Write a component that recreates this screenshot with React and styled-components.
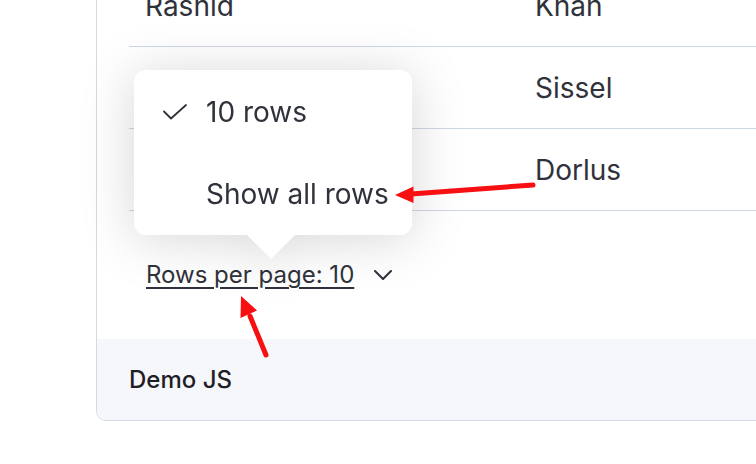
import React from 'react';
import styled, { createGlobalStyle } from 'styled-components';

const GlobalStyle = createGlobalStyle`
  html, body {
    margin: 0;
    padding: 0;
    background: #ffffff;
  }
  body {
    font-family: Inter, "Noto Sans", "Liberation Sans", sans-serif;
    color: #2f313a;
  }
`;

const rows = [
  { first: 'Rashid', last: 'Khan' },
  { first: '', last: 'Sissel' },
  { first: '', last: 'Dorlus' },
];

const options = [
  { label: '10 rows', checked: true },
  { label: 'Show all rows', checked: false },
];

const Page = styled.div`
  position: relative;
  width: 756px;
  height: 464px;
  overflow: hidden;
  padding-left: 96px;
  box-sizing: border-box;
`;

const Card = styled.div`
  width: 760px;
  margin-top: -36px;
  border: 1px solid #d3dae5;
  border-radius: 10px;
  background: #ffffff;
`;

const Table = styled.div`
  padding: 0 32px;
`;

const Row = styled.div`
  display: grid;
  grid-template-columns: 390px 1fr;
  height: 81px;
  align-items: center;
  border-bottom: 1px solid #cfd7e3;
`;

const Cell = styled.div`
  padding: 0 16px;
  font-size: 28px;
  line-height: 34px;
  color: #30323b;
`;

const Pagination = styled.div`
  height: 128px;
  display: flex;
  align-items: center;
  padding-left: 49px;
`;

const Trigger = styled.div`
  position: relative;
  display: inline-flex;
  align-items: center;
  gap: 20px;
  font-size: 24px;
  line-height: 30px;
  color: #30323b;
`;

const TriggerLabel = styled.span`
  text-decoration: underline;
  text-decoration-thickness: 2px;
  text-underline-offset: 4px;
`;

const Popover = styled.div`
  position: absolute;
  left: -12px;
  bottom: calc(100% + 25px);
  width: 278px;
  background: #ffffff;
  border-radius: 12px;
  filter: drop-shadow(0 4px 26px rgba(0, 0, 0, 0.16));
`;

const PopoverArrow = styled.div`
  position: absolute;
  left: 120px;
  bottom: -17px;
  width: 34px;
  height: 34px;
  background: #ffffff;
  transform: rotate(45deg);
`;

const OptionList = styled.ul`
  position: relative;
  list-style: none;
  margin: 0;
  padding: 1px 0 0;
`;

const Option = styled.li`
  display: flex;
  align-items: center;
  height: 82px;
  padding-left: 29px;
  font-size: 28px;
  color: #30323b;
`;

const CheckSlot = styled.span`
  width: 43px;
  display: inline-flex;
  align-items: center;
`;

const Footer = styled.div`
  height: 81px;
  display: flex;
  align-items: center;
  padding-left: 32px;
  background: #f6f7fa;
  border-radius: 0 0 9px 9px;
  font-size: 24px;
  font-weight: 500;
  color: #1f2026;
`;

const Annotations = styled.svg`
  position: absolute;
  top: 0;
  left: 0;
  pointer-events: none;
`;

const Check = () => (
  <svg width="24" height="16" viewBox="0 0 24 16" fill="none">
    <path d="M1 7.5 L8 14.5 L23 1" stroke="#30323b" strokeWidth="1.8" strokeLinecap="round" strokeLinejoin="round" />
  </svg>
);

const Chevron = () => (
  <svg width="18" height="10" viewBox="0 0 18 10" fill="none">
    <path d="M1 1 L9 9 L17 1" stroke="#30323b" strokeWidth="2" strokeLinecap="round" strokeLinejoin="round" />
  </svg>
);

const RED = '#f70f12';

const App = () => (
  <>
    <GlobalStyle />
    <Page>
      <Card>
        <Table>
          {rows.map((r, i) => (
            <Row key={i}>
              <Cell>{r.first}</Cell>
              <Cell>{r.last}</Cell>
            </Row>
          ))}
        </Table>
        <Pagination>
          <Trigger>
            <Popover>
              <PopoverArrow />
              <OptionList>
                {options.map(o => (
                  <Option key={o.label}>
                    <CheckSlot>{o.checked && <Check />}</CheckSlot>
                    {o.label}
                  </Option>
                ))}
              </OptionList>
            </Popover>
            <TriggerLabel>Rows per page: 10</TriggerLabel>
            <Chevron />
          </Trigger>
        </Pagination>
        <Footer>Demo JS</Footer>
      </Card>
      <Annotations width="756" height="464" viewBox="0 0 756 464">
        <line x1="533" y1="185" x2="411" y2="194" stroke={RED} strokeWidth="5" strokeLinecap="round" />
        <polygon points="395,195 413.5,186.5 413.5,203" fill={RED} />
        <line x1="266" y1="355" x2="250" y2="316" stroke={RED} strokeWidth="5" strokeLinecap="round" />
        <polygon points="241,296 257,310.5 240.5,318" fill={RED} />
      </Annotations>
    </Page>
  </>
);

export default App;
